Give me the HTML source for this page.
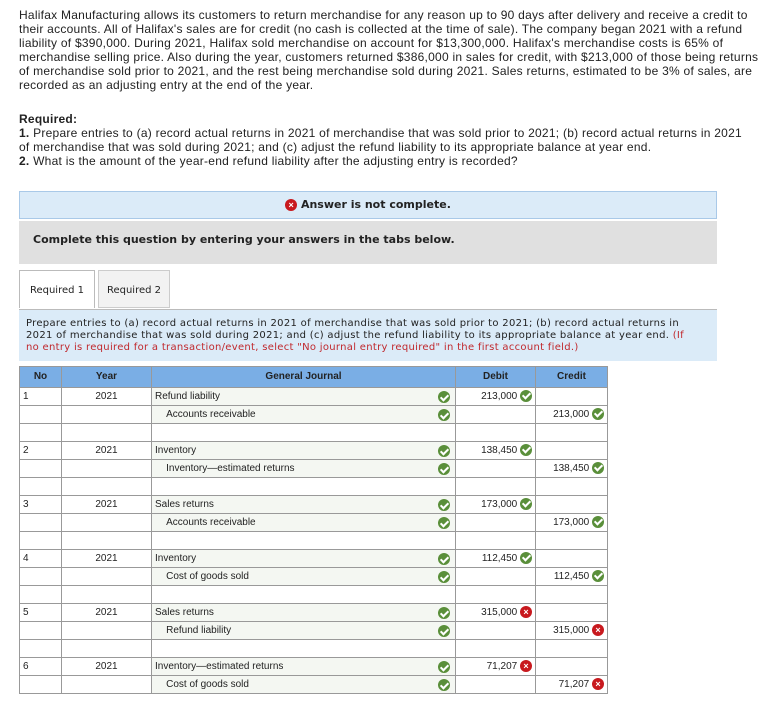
<!DOCTYPE html>
<html><head><style>
body{margin:0;background:#fff;font-family:"Liberation Sans",Arial,sans-serif;color:#222;width:769px;height:703px;overflow:hidden;position:relative}
.p{position:absolute;left:19px;width:740px;font-size:12px;line-height:14px;letter-spacing:0.25px}
.v{font-family:"DejaVu Sans",Verdana,sans-serif}
.ans{position:absolute;left:19px;top:191px;width:696px;height:26px;background:#dbebf8;border:1px solid #a9c9e8;font-size:11px;font-weight:bold;text-align:center;line-height:26px}
.x{display:inline-block;width:12px;height:12px;border-radius:50%;background:#c8191e;color:#fff;font-size:9px;line-height:12px;text-align:center;vertical-align:middle;font-weight:bold;font-family:"Liberation Sans",sans-serif}
.c{display:inline-block;width:12px;height:12px;border-radius:50%;background:#5a8f3a;vertical-align:middle;position:relative}
.c:after{content:"";position:absolute;left:4px;top:1.5px;width:3px;height:6px;border:solid #fff;border-width:0 2px 2px 0;transform:rotate(45deg)}
.gray{position:absolute;left:19px;top:221px;width:698px;height:43px;background:#e0e0e0;font-size:11px;font-weight:bold;line-height:38px;padding-left:14px;box-sizing:border-box}
.tab{position:absolute;top:270px;height:38px;font-size:10px;line-height:40px;text-align:center;box-sizing:border-box}
.inst{position:absolute;left:19px;top:309px;width:698px;height:52px;background:#dbebf8;border-top:1px solid #bbb;font-size:10px;line-height:12px;padding:8px 0 0 7px;box-sizing:border-box;letter-spacing:0.3px;white-space:nowrap;overflow:hidden}
table{position:absolute;left:19px;top:366px;border-collapse:collapse;font-size:10px;width:589px}
td,th{border:1px solid #999;padding:0 3px;height:18px;box-sizing:border-box;line-height:14px}
td.n,td.g{vertical-align:middle}
th{background:#7aaee5;font-weight:bold;height:21px;font-size:10px}
td.g{background:#f4f7f2;position:relative}
td.n{text-align:right;white-space:nowrap}
.gc{position:absolute;right:5px;top:3px}
</style></head><body>
<div class="p" style="top:8px">Halifax Manufacturing allows its customers to return merchandise for any reason up to 90 days after delivery and receive a credit to their accounts. All of Halifax's sales are for credit (no cash is collected at the time of sale). The company began 2021 with a refund liability of $390,000. During 2021, Halifax sold merchandise on account for $13,300,000. Halifax's merchandise costs is 65% of merchandise selling price. Also during the year, customers returned $386,000 in sales for credit, with $213,000 of those being returns of merchandise sold prior to 2021, and the rest being merchandise sold during 2021. Sales returns, estimated to be 3% of sales, are recorded as an adjusting entry at the end of the year.</div>
<div class="p" style="top:112px"><b>Required:</b><br><b>1.</b> Prepare entries to (a) record actual returns in 2021 of merchandise that was sold prior to 2021; (b) record actual returns in 2021<br>of merchandise that was sold during 2021; and (c) adjust the refund liability to its appropriate balance at year end.<br><b>2.</b> What is the amount of the year-end refund liability after the adjusting entry is recorded?</div>
<div class="ans v"><span class="x">×</span> Answer is not complete.</div>
<div class="gray v">Complete this question by entering your answers in the tabs below.</div>
<div class="tab v" style="left:19px;width:76px;border:1px solid #bbb;border-bottom:none;background:#fff">Required 1</div>
<div class="tab v" style="left:98px;width:72px;border:1px solid #ccc;background:#f2f2f2">Required 2</div>
<div class="inst v">Prepare entries to (a) record actual returns in 2021 of merchandise that was sold prior to 2021; (b) record actual returns in<br>2021 of merchandise that was sold during 2021; and (c) adjust the refund liability to its appropriate balance at year end. <span style="color:#c0282d">(If<br>no entry is required for a transaction/event, select "No journal entry required" in the first account field.)</span></div>
<table>
<tr><th style="width:42px">No</th><th style="width:90px">Year</th><th style="width:304px">General Journal</th><th style="width:80px">Debit</th><th>Credit</th></tr>
<tr><td>1</td><td align=center>2021</td><td class="g">Refund liability<span class="c gc"></span></td><td class="n">213,000 <span class="c"></span></td><td></td></tr>
<tr><td></td><td></td><td class="g">&nbsp;&nbsp;&nbsp;&nbsp;Accounts receivable<span class="c gc"></span></td><td></td><td class="n">213,000 <span class="c"></span></td></tr>
<tr><td></td><td></td><td></td><td></td><td></td></tr>
<tr><td>2</td><td align=center>2021</td><td class="g">Inventory<span class="c gc"></span></td><td class="n">138,450 <span class="c"></span></td><td></td></tr>
<tr><td></td><td></td><td class="g">&nbsp;&nbsp;&nbsp;&nbsp;Inventory—estimated returns<span class="c gc"></span></td><td></td><td class="n">138,450 <span class="c"></span></td></tr>
<tr><td></td><td></td><td></td><td></td><td></td></tr>
<tr><td>3</td><td align=center>2021</td><td class="g">Sales returns<span class="c gc"></span></td><td class="n">173,000 <span class="c"></span></td><td></td></tr>
<tr><td></td><td></td><td class="g">&nbsp;&nbsp;&nbsp;&nbsp;Accounts receivable<span class="c gc"></span></td><td></td><td class="n">173,000 <span class="c"></span></td></tr>
<tr><td></td><td></td><td></td><td></td><td></td></tr>
<tr><td>4</td><td align=center>2021</td><td class="g">Inventory<span class="c gc"></span></td><td class="n">112,450 <span class="c"></span></td><td></td></tr>
<tr><td></td><td></td><td class="g">&nbsp;&nbsp;&nbsp;&nbsp;Cost of goods sold<span class="c gc"></span></td><td></td><td class="n">112,450 <span class="c"></span></td></tr>
<tr><td></td><td></td><td></td><td></td><td></td></tr>
<tr><td>5</td><td align=center>2021</td><td class="g">Sales returns<span class="c gc"></span></td><td class="n">315,000 <span class="x">×</span></td><td></td></tr>
<tr><td></td><td></td><td class="g">&nbsp;&nbsp;&nbsp;&nbsp;Refund liability<span class="c gc"></span></td><td></td><td class="n">315,000 <span class="x">×</span></td></tr>
<tr><td></td><td></td><td></td><td></td><td></td></tr>
<tr><td>6</td><td align=center>2021</td><td class="g">Inventory—estimated returns<span class="c gc"></span></td><td class="n">71,207 <span class="x">×</span></td><td></td></tr>
<tr><td></td><td></td><td class="g">&nbsp;&nbsp;&nbsp;&nbsp;Cost of goods sold<span class="c gc"></span></td><td></td><td class="n">71,207 <span class="x">×</span></td></tr>
</table>
</body></html>
